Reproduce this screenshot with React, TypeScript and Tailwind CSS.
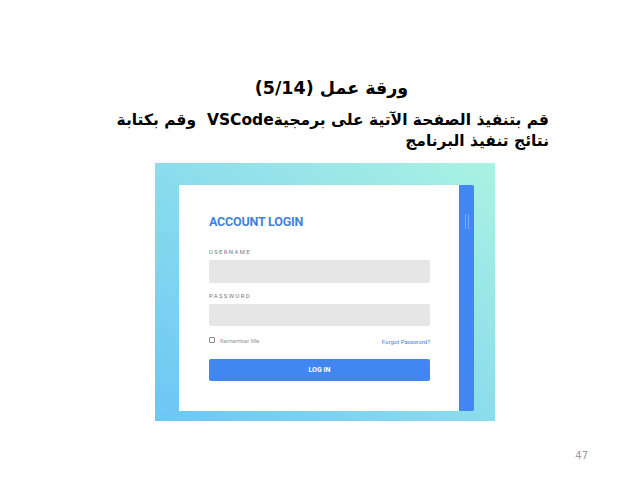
import React from 'react';

const arabic = { fontFamily: '"DejaVu Sans", "Noto Sans", sans-serif' };
const roboto = { fontFamily: 'Roboto, "Liberation Sans", sans-serif' };

function LoginCard() {
  return (
    <div className="flex w-[340px] h-[258px] pl-[24px] pt-[22px] bg-gradient-to-tr from-[#6cc6f5] to-[#aaf2e2]">
      <div className="flex h-[226px]">
        <div className="w-[280px] h-full bg-white pl-[30px] pt-[29px] pr-[29px] flex flex-col" style={roboto}>
          <h2 className="text-[12.5px] leading-[16px] font-bold text-[#3f82dc] tracking-[-0.2px]">ACCOUNT LOGIN</h2>
          <label className="mt-[18px] text-[6px] leading-[8px] tracking-[0.22em] text-[#777]">USERNAME</label>
          <div className="mt-[4px] h-[23px] w-full rounded-[2px] bg-[#e6e6e6]" />
          <label className="mt-[9px] text-[6px] leading-[8px] tracking-[0.22em] text-[#777]">PASSWORD</label>
          <div className="mt-[4px] h-[22px] w-full rounded-[2px] bg-[#e6e6e6]" />
          <div className="mt-[9px] h-[10px] flex items-center justify-between">
            <div className="flex items-center gap-[5px]">
              <span className="w-[6px] h-[6px] border border-[#888] rounded-[1px]" />
              <span className="text-[6px] text-[#999]">Remember Me</span>
            </div>
            <span className="text-[6px] text-[#3f82dc] mt-[2px]">Forgot Password?</span>
          </div>
          <button className="mt-[14px] h-[22px] w-full rounded-[2px] bg-[#4286f2] text-white text-[7px] font-bold">
            LOG IN
          </button>
        </div>
        <div className="w-[15px] h-full bg-[#4286f2] rounded-r-[2px] flex justify-center pt-[29px] gap-[2px]">
          <span className="w-px h-[15px] bg-[#7eaaf2]" />
          <span className="w-px h-[15px] bg-[#7eaaf2]" />
        </div>
      </div>
    </div>
  );
}

export default function App() {
  return (
    <div className="w-[638px] h-[478px] bg-white flex flex-col overflow-hidden">
      <h1 dir="rtl" className="pt-[76px] pl-[25px] text-center text-[17.5px] leading-[24px] font-bold text-black" style={arabic}>
        ورقة عمل (5/14)
      </h1>
      <p dir="rtl" className="mt-[10px] pr-[89px] text-[15.5px] leading-[21px] font-bold text-black whitespace-pre" style={arabic}>
        {'قم بتنفيذ الصفحة الآتية على برمجيةVSCode  وقم بكتابة'}
        <br />
        {'نتائج تنفيذ البرنامج'}
      </p>
      <div className="mt-[11px] pl-[155px]">
        <LoginCard />
      </div>
      <div className="mt-[29px] pr-[50px] text-right text-[10px] leading-[12px] text-[#999]" style={arabic}>
        47
      </div>
    </div>
  );
}
